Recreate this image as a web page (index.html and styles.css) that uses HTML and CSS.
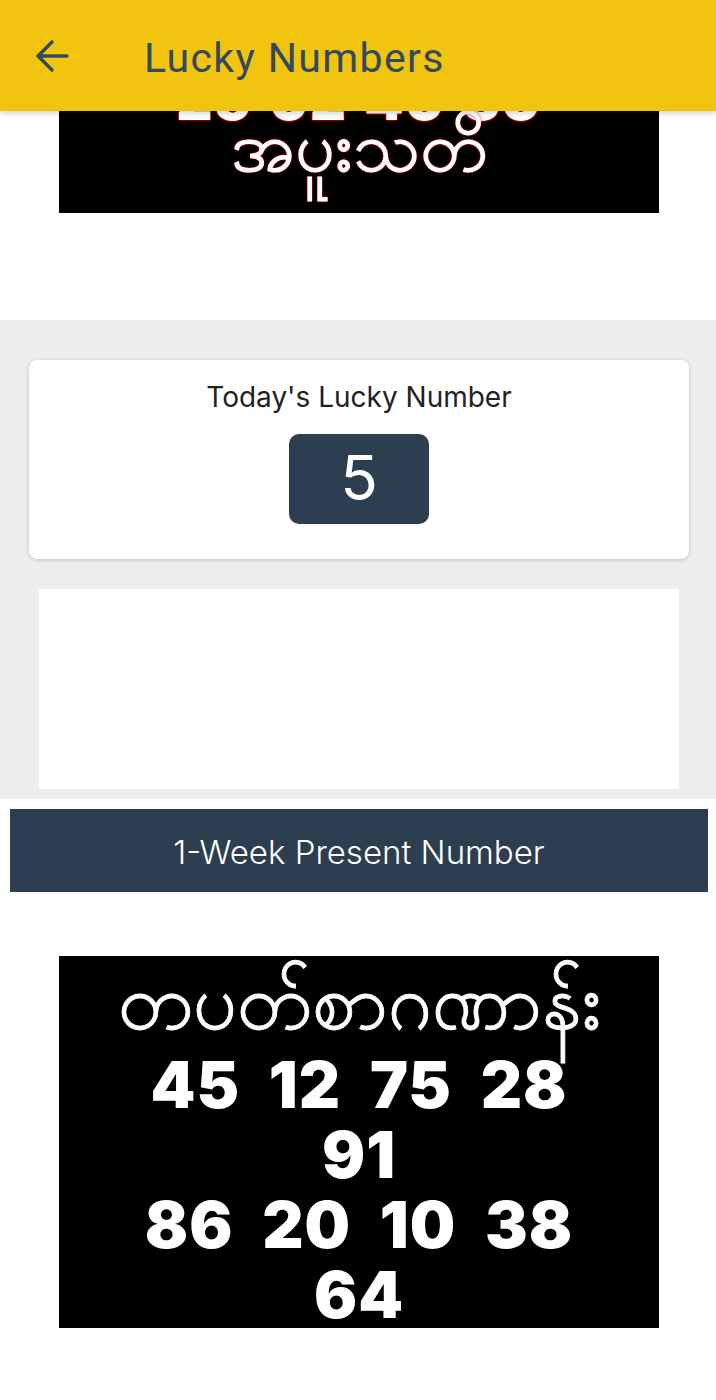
FILE: index.html
```html
<!DOCTYPE html>
<html lang="en">
<head>
    <meta charset="UTF-8">
    <meta name="viewport" content="width=device-width, initial-scale=1.0">
    <title>Lucky Numbers</title>
    <link rel="stylesheet" href="styles.css">
</head>
<body>
    <header class="app-bar">
        <svg class="back-icon" width="36" height="36" viewBox="0 0 36 36" fill="none" stroke="#34495e" stroke-width="3.4" stroke-linecap="round">
            <path d="M33 18H4M18 4L4 18l14 14"/>
        </svg>
        <h1>Lucky Numbers</h1>
    </header>

    <main class="content">
        <section class="banner-wrap top-banner-wrap">
            <div class="banner top-banner">
                <p class="nums nums-red">25 02 40 30</p>
                <p class="burmese burmese-red">အပူးသတိ</p>
            </div>
        </section>

        <section class="today">
            <div class="card">
                <p class="card-title">Today's Lucky Number</p>
                <div class="number-box">5</div>
            </div>
            <div class="ad-box"></div>
        </section>

        <div class="week-bar">1-Week Present Number</div>

        <section class="banner-wrap">
            <div class="banner week-banner">
                <p class="burmese">တပတ်စာဂဏာန်း</p>
                <p class="nums week-nums">45 12 75 28<br>91<br>86 20 10 38<br>64</p>
            </div>
        </section>
    </main>
</body>
</html>
```

FILE: styles.css
```css
* {
    box-sizing: border-box;
}

body {
    margin: 0;
    height: 1400px;
    overflow: hidden;
    background-color: #fff;
    font-family: Inter, "Liberation Sans", sans-serif;
    position: relative;
}

p {
    margin: 0;
}

.app-bar {
    position: absolute;
    top: 0;
    left: 0;
    right: 0;
    z-index: 2;
    height: 111px;
    display: flex;
    align-items: center;
    background-color: #f1c40f;
    box-shadow: 0 2px 6px rgba(0, 0, 0, 0.2);
}

.back-icon {
    margin-left: 34px;
}

.app-bar h1 {
    margin: 4px 0 0 74px;
    font-family: Roboto, "Liberation Sans", sans-serif;
    font-size: 41px;
    font-weight: 400;
    letter-spacing: 1.35px;
    color: #34495e;
}

.content {
    margin-top: -160px;
}

.banner-wrap {
    display: flex;
    justify-content: center;
    padding-left: 2px;
}

.banner {
    width: 600px;
    background-color: #000;
    text-align: center;
    color: #fff;
}

.top-banner {
    height: 373px;
    padding-top: 236px;
}

.nums {
    font-family: Inter, "Liberation Sans", sans-serif;
    font-size: 64px;
    font-weight: 900;
    line-height: 70px;
    letter-spacing: 1px;
    word-spacing: 15px;
}

.nums-red {
    font-size: 56px;
    line-height: 48px;
    word-spacing: 5px;
    text-shadow: 0 0 3px #d00, 0 0 3px #d00;
}

.week-nums {
    margin-top: 30px;
}

.burmese {
    font-family: "Noto Sans", "DejaVu Sans", sans-serif;
    font-size: 77px;
    line-height: 40px;
    -webkit-text-stroke: 0.8px #fff;
}

.burmese-red {
    font-size: 69px;
    -webkit-text-stroke: 1.2px #fff;
    text-shadow: 0 0 2px #e00, 0 0 3px #e00;
}

.top-banner-wrap {
    padding-bottom: 107px;
}

.today {
    height: 479px;
    padding: 40px 27px 0 29px;
    background-color: #eee;
}

.card {
    height: 199px;
    padding-top: 22px;
    background-color: #fff;
    border-radius: 8px;
    box-shadow: 0 1px 4px rgba(0, 0, 0, 0.2);
    text-align: center;
}

.card-title {
    font-size: 28px;
    line-height: 30px;
    color: #222;
}

.number-box {
    width: 140px;
    height: 90px;
    margin: 22px auto 0;
    border-radius: 10px;
    background-color: #2c3e50;
    color: #fff;
    font-size: 62px;
    line-height: 88px;
}

.ad-box {
    height: 200px;
    margin: 30px 10px 0;
    background-color: #fff;
}

.week-bar {
    height: 83px;
    margin: 10px 8px 64px 10px;
    background-color: #2c3e50;
    color: #fff;
    font-size: 33px;
    font-weight: 300;
    line-height: 87px;
    text-align: center;
}

.week-banner {
    height: 372px;
    padding-top: 24px;
}
```
